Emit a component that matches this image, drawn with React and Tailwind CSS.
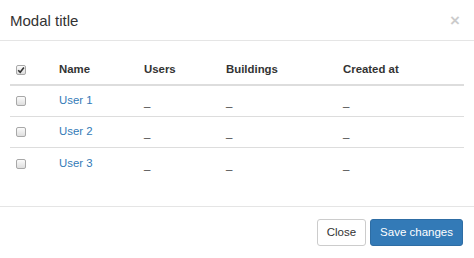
import React from "react";

const Box = ({ checked }) => (
  <span className="inline-flex h-[10px] w-[10px] items-center justify-center rounded-[2px] border border-[#a8a8a8] bg-gradient-to-b from-[#fbfbfb] to-[#dedede]">
    {checked && (
      <svg width="8" height="8" viewBox="0 0 8 8">
        <path d="M1.2 4.2 L3.2 6.2 L6.9 1.4" fill="none" stroke="#333" strokeWidth="1.6" />
      </svg>
    )}
  </span>
);

const cols = "grid grid-cols-[43px_85px_82px_117px_126px] items-center";

const App = () => {
  const rows = ["User 1", "User 2", "User 3"];
  return (
    <div className="w-[474px] h-[258px] bg-white text-[#333] font-['Liberation_Sans',Arial,sans-serif] flex flex-col">
      {/* Header */}
      <div className="h-[41px] border-b border-[#e5e5e5] flex items-center justify-between pl-[10px] pr-[14px]">
        <h4 className="text-[15px] leading-none">Modal title</h4>
        <span className="text-[17px] font-bold leading-none text-black opacity-20">×</span>
      </div>

      {/* Body */}
      <div className="px-[10px] pt-[14px] pb-[27px]">
        <div className="text-[11.4px]">
          <div className={`${cols} h-[31px] border-b-2 border-[#ddd] font-bold`}>
            <div className="pl-[6px] flex"><Box checked /></div>
            <div className="pl-[6px]">Name</div>
            <div className="pl-[6px]">Users</div>
            <div className="pl-[6px]">Buildings</div>
            <div className="pl-[6px]">Created at</div>
          </div>
          {rows.map((name, i) => (
            <div
              key={name}
              className={`${cols} h-[31px] ${i < rows.length - 1 ? "border-b border-[#ddd]" : ""}`}
            >
              <div className="pl-[6px] flex"><Box /></div>
              <div className="pl-[6px] text-[#337ab7]">{name}</div>
              <div className="pl-[6px] pt-[4px]">_</div>
              <div className="pl-[6px] pt-[4px]">_</div>
              <div className="pl-[6px] pt-[4px]">_</div>
            </div>
          ))}
        </div>
      </div>

      {/* Footer */}
      <div className="border-t border-[#e5e5e5] flex justify-end gap-[4px] pr-[11px] pt-[12px]">
        <button className="h-[27px] px-[9px] rounded-[3px] border border-[#ccc] bg-white text-[11.5px] text-[#333]">
          Close
        </button>
        <button className="h-[27px] px-[9px] rounded-[3px] border border-[#2e6da4] bg-[#337ab7] text-[11.5px] text-white">
          Save changes
        </button>
      </div>
    </div>
  );
};

export default App;
